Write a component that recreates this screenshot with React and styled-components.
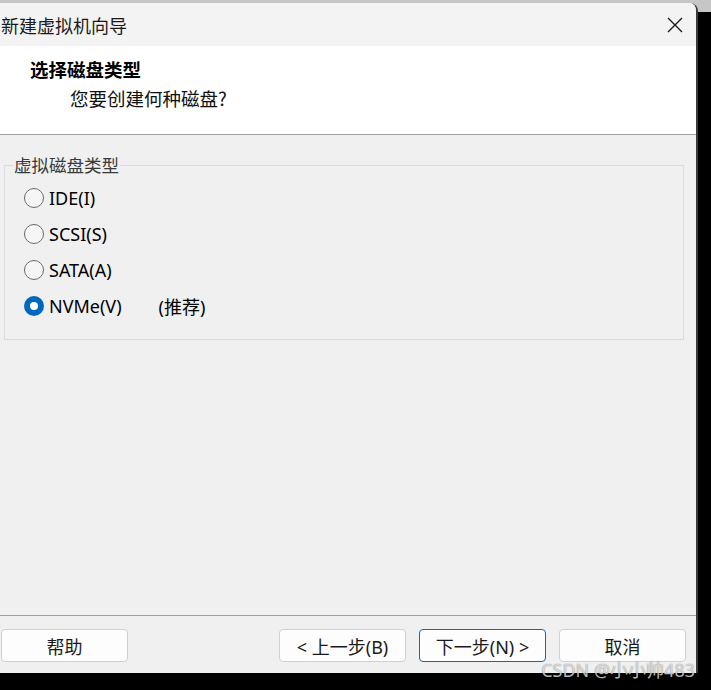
import React from 'react';
import styled, { createGlobalStyle } from 'styled-components';

const GlobalStyle = createGlobalStyle`
  html, body {
    margin: 0;
    padding: 0;
  }
  body {
    font-family: 'Noto Sans', 'Noto Sans CJK SC', sans-serif;
  }
`;

const Desktop = styled.div`
  position: relative;
  width: 711px;
  height: 690px;
  overflow: hidden;
  background: linear-gradient(#c6c6c6 0 12px, #000 12px);
  padding-top: 3px;
  box-sizing: border-box;
`;

const Window = styled.div`
  width: 698px;
  height: 670px;
  display: flex;
  flex-direction: column;
  background: #f0f0f0;
  border-right: 2px solid #3a3a3a;
  border-radius: 0 8px 0 0;
  overflow: hidden;
  box-sizing: border-box;
`;

const TitleBar = styled.div`
  height: 43px;
  flex: none;
  display: flex;
  align-items: center;
  justify-content: space-between;
  background: #f3f3f3;
  padding-left: 1px;
`;

const TitleText = styled.span`
  font-family: 'Noto Sans CJK SC', sans-serif;
  font-size: 18px;
  color: #1a1a1a;
  line-height: 24px;
`;

const CloseButton = styled.div`
  width: 42px;
  height: 43px;
  display: flex;
  align-items: center;
  justify-content: center;
`;

const Header = styled.div`
  height: 89px;
  flex: none;
  background: #fff;
  border-bottom: 1px solid #a0a0a0;
  padding-top: 11px;
  box-sizing: border-box;
`;

const Heading = styled.div`
  font-family: 'Noto Sans CJK SC', serif;
  font-weight: 700;
  font-size: 18.5px;
  line-height: 24px;
  color: #000;
  padding-left: 30px;
`;

const SubHeading = styled.div`
  font-family: 'Noto Sans CJK SC', serif;
  font-size: 18.5px;
  line-height: 24px;
  color: #111;
  padding-left: 70px;
  margin-top: 5px;
`;

const Body = styled.div`
  flex: 1;
  padding-top: 18px;
`;

const Group = styled.fieldset`
  margin: 0 12px 0 4px;
  padding: 0 0 15px 8px;
  border: 1px solid #dcdcdc;
  min-width: 0;
`;

const GroupLabel = styled.legend`
  padding: 0 1px;
  font-family: 'Noto Sans CJK SC', sans-serif;
  font-size: 17.5px;
  line-height: 24px;
  color: #3a3a3a;
`;

const Options = styled.div`
  display: flex;
  flex-direction: column;
  padding: 3px 0 0 11px;
`;

const Option = styled.label`
  height: 36px;
  display: flex;
  align-items: center;
  gap: 5px;
  font-size: 18px;
  color: #000;
`;

const Radio = styled.span`
  width: 20px;
  height: 20px;
  box-sizing: border-box;
  border-radius: 50%;
  flex: none;
  display: flex;
  align-items: center;
  justify-content: center;
  border: ${(p) => (p.checked ? 'none' : '1px solid #6a6a6a')};
  background: ${(p) => (p.checked ? '#0067c0' : '#f6f6f6')};

  &::after {
    content: '';
    display: ${(p) => (p.checked ? 'block' : 'none')};
    width: 8px;
    height: 8px;
    border-radius: 50%;
    background: #fff;
  }
`;

const Note = styled.span`
  margin-left: 32px;
  font-family: 'Noto Sans', 'Noto Sans CJK SC', sans-serif;
`;

const Footer = styled.div`
  height: 58px;
  flex: none;
  border-top: 1px solid #a0a0a0;
  display: flex;
  justify-content: space-between;
  padding: 13px 10px 0 1px;
  box-sizing: border-box;
`;

const ButtonGroup = styled.div`
  display: flex;
  gap: 13px;
`;

const Button = styled.button`
  width: 127px;
  height: 33px;
  padding: 0;
  border-radius: 4px;
  background: #fdfdfd;
  border: 1px solid ${(p) => (p.primary ? '#1565c0' : '#d0d0d0')};
  font-family: 'Noto Sans', 'Noto Sans CJK SC', sans-serif;
  font-size: 18px;
  color: #1a1a1a;
  display: flex;
  align-items: center;
  justify-content: center;
`;

const Watermark = styled.div`
  position: absolute;
  right: 16px;
  bottom: 20px;
  transform: translateY(50%);
  font-family: 'Noto Sans', 'Noto Sans CJK SC', sans-serif;
  font-size: 18px;
  line-height: 20px;
  color: rgba(255, 255, 255, 0.72);
  text-shadow: 0 0 1px rgba(0, 0, 0, 0.6);
  pointer-events: none;
`;

const options = [
  { label: 'IDE(I)' },
  { label: 'SCSI(S)' },
  { label: 'SATA(A)' },
  { label: 'NVMe(V)', checked: true, note: '(推荐)' },
];

function CloseIcon() {
  return (
    <svg width="18" height="18" viewBox="0 0 18 18">
      <path d="M2 2 L16 16 M16 2 L2 16" stroke="#1a1a1a" strokeWidth="1.4" fill="none" />
    </svg>
  );
}

export default function App() {
  return (
    <>
      <GlobalStyle />
      <Desktop>
        <Window>
          <TitleBar>
            <TitleText>新建虚拟机向导</TitleText>
            <CloseButton>
              <CloseIcon />
            </CloseButton>
          </TitleBar>
          <Header>
            <Heading>选择磁盘类型</Heading>
            <SubHeading>您要创建何种磁盘?</SubHeading>
          </Header>
          <Body>
            <Group>
              <GroupLabel>虚拟磁盘类型</GroupLabel>
              <Options>
                {options.map((o) => (
                  <Option key={o.label}>
                    <Radio checked={o.checked} />
                    <span>{o.label}</span>
                    {o.note && <Note>{o.note}</Note>}
                  </Option>
                ))}
              </Options>
            </Group>
          </Body>
          <Footer>
            <Button>帮助</Button>
            <ButtonGroup>
              <Button>&lt; 上一步(B)</Button>
              <Button primary>下一步(N) &gt;</Button>
              <Button>取消</Button>
            </ButtonGroup>
          </Footer>
        </Window>
        <Watermark>CSDN @小小帅483</Watermark>
      </Desktop>
    </>
  );
}
